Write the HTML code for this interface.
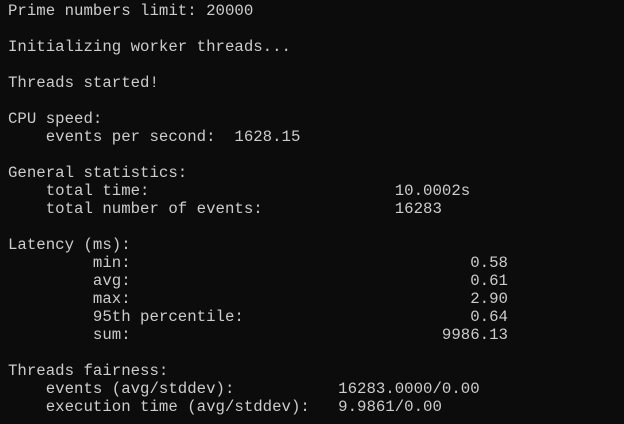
<!DOCTYPE html>
<html><head><meta charset="utf-8"><style>
html,body{margin:0;padding:0;background:#0c0c0c;width:624px;height:424px;overflow:hidden}
pre{margin:0;padding:2px 0 0 8px;font-family:"Liberation Mono",monospace;font-size:15.72px;line-height:18px;color:#cccccc;white-space:pre}
</style></head><body><pre>Prime numbers limit: 20000

Initializing worker threads...

Threads started!

CPU speed:
    events per second:  1628.15

General statistics:
    total time:                          10.0002s
    total number of events:              16283

Latency (ms):
         min:                                    0.58
         avg:                                    0.61
         max:                                    2.90
         95th percentile:                        0.64
         sum:                                 9986.13

Threads fairness:
    events (avg/stddev):           16283.0000/0.00
    execution time (avg/stddev):   9.9861/0.00</pre></body></html>
